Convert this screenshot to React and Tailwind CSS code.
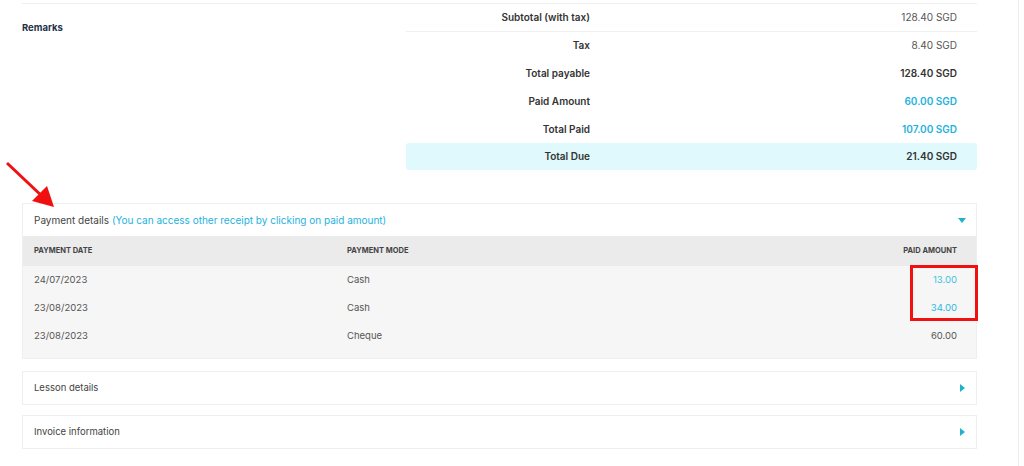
import React from "react";

function CaretDown() {
  return (
    <svg width="8" height="5" viewBox="0 0 8 5" className="block">
      <path d="M0 0 L8 0 L4 5 Z" fill="#1fb3c9" />
    </svg>
  );
}
function CaretRight() {
  return (
    <svg width="5" height="8" viewBox="0 0 5 8" className="block">
      <path d="M0 0 L5 4 L0 8 Z" fill="#1fb3c9" />
    </svg>
  );
}

const summary = [
  { label: "Tax", value: "8.40 SGD", vc: "text-[#555] font-normal" },
  { label: "Total payable", value: "128.40 SGD", vc: "text-[#333] font-semibold" },
  { label: "Paid Amount", value: "60.00 SGD", vc: "text-[#1eb2de] font-semibold" },
  { label: "Total Paid", value: "107.00 SGD", vc: "text-[#1eb2de] font-semibold" },
];

const payments = [
  { date: "24/07/2023", mode: "Cash", amt: "13.00", link: true },
  { date: "23/08/2023", mode: "Cash", amt: "34.00", link: true },
  { date: "23/08/2023", mode: "Cheque", amt: "60.00", link: false },
];

export default function App() {
  return (
    <div className="relative w-[1024px] h-[466px] bg-white overflow-hidden font-['Inter',sans-serif] text-[10px]">
      <div className="w-[1019px] h-full border-r border-[#ececec] pl-[22px] pt-[3px]">
        <div className="w-[955px]">
          {/* top section */}
          <div className="border-t border-[#efefef] flex">
            <div className="w-[384px] pt-[17px]">
              <div className="text-[9.5px] font-bold text-[#1f3148] leading-[14px]">Remarks</div>
            </div>
            <div className="flex-1">
              <div className="flex items-center h-[28px] border-b border-[#f0f0f0]">
                <div className="w-[184px] text-right text-[#333] font-semibold text-[10px]">Subtotal (with tax)</div>
                <div className="flex-1 text-right pr-[20px] text-[10px] text-[#555]">128.40 SGD</div>
              </div>
              {summary.map((r) => (
                <div key={r.label} className="flex items-center h-[27.75px]">
                  <div className="w-[184px] text-right text-[#333] font-semibold text-[10px]">{r.label}</div>
                  <div className={`flex-1 text-right pr-[20px] text-[10px] ${r.vc}`}>{r.value}</div>
                </div>
              ))}
              <div className="flex items-center h-[27px] bg-[#dff9fc] rounded-[3px]">
                <div className="w-[184px] text-right text-[#333] font-semibold text-[10px]">Total Due</div>
                <div className="flex-1 text-right pr-[20px] text-[10px] text-[#333] font-semibold">21.40 SGD</div>
              </div>
            </div>
          </div>

          {/* payment details */}
          <div className="mt-[33px] border border-[#efefef]">
            <div className="h-[32px] flex items-center justify-between pl-[11px] pr-[10px] bg-white">
              <div className="text-[10px] text-[#444]">
                Payment details{" "}
                <span className="text-[#1eb2de]">(You can access other receipt by clicking on paid amount)</span>
              </div>
              <CaretDown />
            </div>
            <div className="h-[30px] bg-[#ebebeb] grid grid-cols-[313px_1fr_auto] items-center pl-[11px] pr-[19px] text-[7.5px] font-bold text-[#444] uppercase">
              <div>Payment Date</div>
              <div>Payment Mode</div>
              <div className="text-right">Paid Amount</div>
            </div>
            <div className="bg-[#f6f6f6] pb-[8px]">
              {payments.map((p, i) => (
                <div
                  key={i}
                  className="h-[28px] grid grid-cols-[313px_1fr_auto] items-center pl-[11px] pr-[19px] text-[9.5px] text-[#555]"
                >
                  <div>{p.date}</div>
                  <div>{p.mode}</div>
                  <div className={`text-right ${p.link ? (i === 0 ? "text-[#3cc3e0]" : "text-[#2bb8e0]") : ""}`}>{p.amt}</div>
                </div>
              ))}
            </div>
          </div>

          <div className="mt-[12px] h-[34px] border border-[#efefef] flex items-center justify-between pl-[11px] pr-[11px]">
            <div className="text-[9.5px] text-[#444]">Lesson details</div>
            <CaretRight />
          </div>
          <div className="mt-[10px] h-[34px] border border-[#efefef] flex items-center justify-between pl-[11px] pr-[11px]">
            <div className="text-[9.5px] text-[#444]">Invoice information</div>
            <CaretRight />
          </div>
        </div>
      </div>

      {/* annotation: red box */}
      <div className="absolute left-[910px] top-[265px] w-[68px] h-[56px] border-[3px] border-[#f01010]" />

      {/* annotation: red arrow */}
      <svg className="absolute left-0 top-[155px]" width="70" height="60" viewBox="0 0 70 60">
        <line x1="7" y1="8" x2="44" y2="43" stroke="#f01010" strokeWidth="3" />
        <path d="M54 52 L32 46 L47 31 Z" fill="#f01010" />
      </svg>
    </div>
  );
}
